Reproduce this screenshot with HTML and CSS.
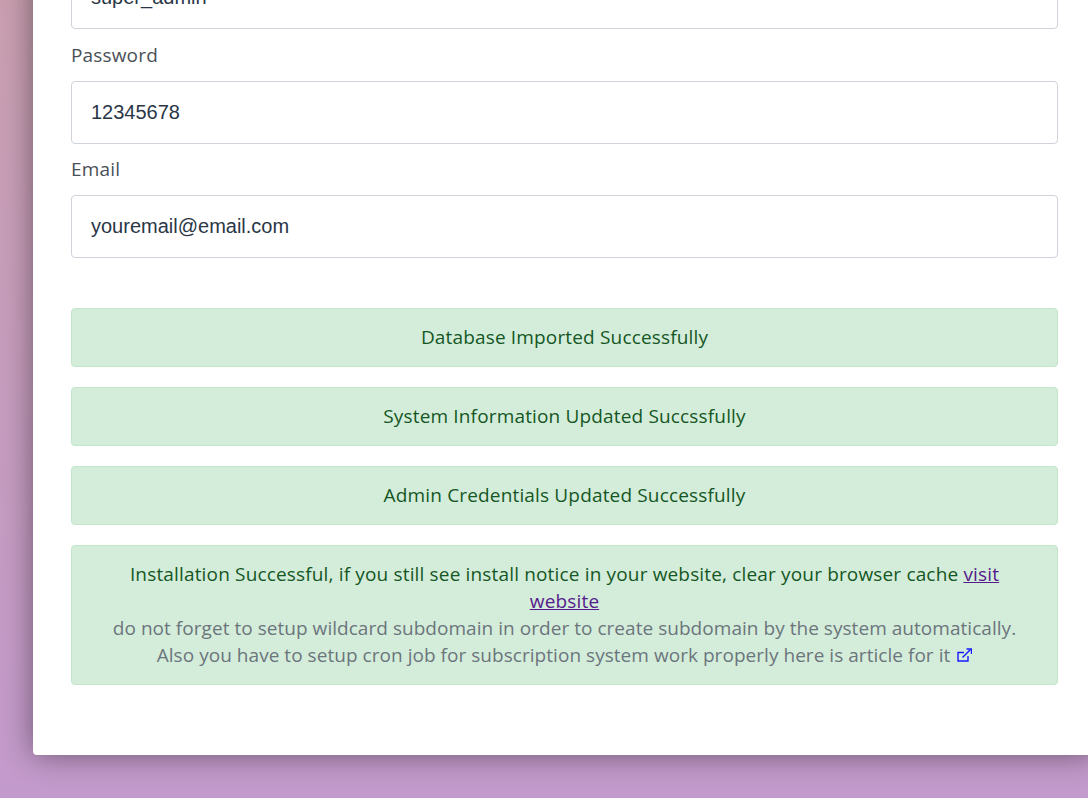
FILE: index.html
```html
<!DOCTYPE html>
<html lang="en">
<head>
  <meta charset="UTF-8" />
  <meta name="viewport" content="width=device-width, initial-scale=1.0" />
  <title>Install</title>
  <link rel="stylesheet" href="styles.css">
</head>
<body>
  <div class="card">
    <div class="form-group">
      <label for="username">Username</label>
      <input type="text" id="username" value="super_admin" />
    </div>
    <div class="form-group">
      <label for="password">Password</label>
      <input type="text" id="password" value="12345678" />
    </div>
    <div class="form-group">
      <label for="email">Email</label>
      <input type="text" id="email" value="youremail@email.com" />
    </div>

    <div class="alerts">
      <div class="alert">Database Imported Successfully</div>
      <div class="alert">System Information Updated Succssfully</div>
      <div class="alert">Admin Credentials Updated Successfully</div>
      <div class="alert">
        Installation Successful, if you still see install notice in your website, clear your browser cache <a href="#">visit<br>website</a>
        <p class="muted">do not forget to setup wildcard subdomain in order to create subdomain by the system automatically.<br>
        Also you have to setup cron job for subscription system work properly here is article for it
        <a href="#" class="ext"><svg width="15" height="15" viewBox="0 0 15 15" fill="none" stroke="#1a1aff" stroke-width="1.4"><path d="M11 8v5H1V4.5h6"/><path d="M5.5 9.5 13.5 1.5"/><path d="M9.5 1h5v5"/></svg></a></p>
      </div>
    </div>
  </div>
</body>
</html>
```

FILE: styles.css
```css
html, body {
  height: 100%;
}
body {
  margin: 0;
  height: 798px;
  box-sizing: border-box;
  overflow: hidden;
  display: flex;
  flex-direction: column;
  justify-content: flex-end;
  padding: 0 0 43px 33px;
  background: linear-gradient(#c99fb0 0%, #c39acc 100%);
  font-family: "Open Sans", sans-serif;
  font-size: 19px;
  letter-spacing: 0.16px;
  line-height: 27px;
  color: #495057;
}
.card {
  flex: none;
  width: 1063px;
  box-sizing: border-box;
  padding: 0 38px 70px;
  background-color: #fff;
  border-radius: 4px;
  box-shadow: 0 0 30px rgba(0, 0, 0, 0.45);
}
.form-group {
  margin-bottom: 12.4px;
}
label {
  display: block;
  margin-bottom: 12.4px;
}
input[type="text"] {
  display: block;
  width: 100%;
  height: 62.6px;
  box-sizing: border-box;
  padding: 0 19px;
  border: 1px solid #ced4da;
  border-radius: 4px;
  font-family: "Liberation Sans", sans-serif;
  font-size: 20px;
  letter-spacing: 0;
  color: #2a3646;
  outline: none;
}
.alerts {
  margin-top: 50px;
}
.alert {
  padding: 15px 20px;
  margin-bottom: 20px;
  background-color: #d4edda;
  border: 1px solid #c3e6cb;
  border-radius: 4px;
  color: #155724;
  text-align: center;
}
.alert:last-child {
  margin-bottom: 0;
}
.alert a {
  color: #551a8b;
}
.muted {
  margin: 0;
  color: #6c757d;
  letter-spacing: 0.04px;
}
.ext svg {
  vertical-align: -1px;
  margin-left: 2px;
}
```
